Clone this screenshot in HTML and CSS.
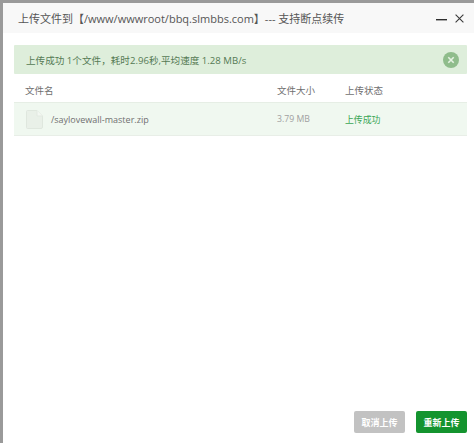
FILE: index.html
```html
<!DOCTYPE html>
<html lang="zh">
<head>
<meta charset="utf-8">
<title>上传文件</title>
<link rel="stylesheet" href="styles.css">
</head>
<body>
<div class="dialog">
  <header class="titlebar">
    <div class="title">上传文件到【/www/wwwroot/bbq.slmbbs.com】--- 支持断点续传</div>
    <div class="controls">
      <svg class="ctl-min" width="11" height="2" viewBox="0 0 11 2"><rect width="11" height="1.4" fill="#2f2f2f"/></svg>
      <svg class="ctl-close" width="9" height="9" viewBox="0 0 9 9"><path d="M.6.6l7.800 7.800M8.400.6L.6 8.400" stroke="#3a3a3a" stroke-width="1.1" fill="none"/></svg>
    </div>
  </header>
  <main class="content">
    <div class="alert">
      <span>上传成功 1个文件，耗时2.96秒,平均速度 1.28 MB/s</span>
      <span class="alert-close">
        <svg width="16" height="16" viewBox="0 0 16 16"><circle cx="8" cy="8" r="8" fill="#8fbc8b"/><path d="M5.300 5.300l5.400 5.400M10.700 5.300l-5.400 5.400" stroke="#e6f2e3" stroke-width="1.600" fill="none"/></svg>
      </span>
    </div>
    <div class="row head">
      <div class="c-name">文件名</div>
      <div class="c-size">文件大小</div>
      <div class="c-state">上传状态</div>
    </div>
    <div class="row file">
      <div class="c-name name-cell">
        <svg width="17" height="19" viewBox="0 0 17 19"><path d="M1.500.5H11L16.500 6V17a1.500 1.500 0 0 1-1.500 1.500H1.500A1 1 0 0 1 .5 17.500V1.500A1 1 0 0 1 1.500.5z" fill="#e9f0e8" stroke="#dfe7de"/><path d="M11 .5V6H16.500" fill="#f3f7f2" stroke="#e2e9e1"/></svg>
        <span>/saylovewall-master.zip</span>
      </div>
      <div class="c-size size-val">3.79 MB</div>
      <div class="c-state ok">上传成功</div>
    </div>
  </main>
  <footer class="actions">
    <button class="btn btn-off">取消上传</button>
    <button class="btn btn-go">重新上传</button>
  </footer>
</div>
</body>
</html>
```
FILE: styles.css
```css
* { box-sizing: border-box; }
html, body { height: 100%; }
body {
  margin: 0;
  padding: 3px 0 0 3px;
  background: #9a9a9a;
  font-family: "Open Sans", "Noto Sans CJK SC", sans-serif;
  overflow: hidden;
}
.dialog {
  height: 440px;
  width: 471px;
  background: #fff;
  display: flex;
  flex-direction: column;
}
.titlebar {
  height: 30px;
  flex: none;
  background: #f8f8f8;
  display: flex;
  align-items: center;
  justify-content: space-between;
  padding: 0 10px 0 15px;
}
.title { font-size: 11px; color: #555; white-space: nowrap; }
.controls { display: flex; align-items: center; gap: 8px; }
.ctl-min { margin-top: 4px; }
.content { flex: 1; padding: 12px 7px 0 11px; }
.alert {
  height: 29px;
  background: #deeedb;
  color: #557a54;
  font-size: 9.6px;
  display: flex;
  align-items: center;
  justify-content: space-between;
  padding: 0 8px 0 12px;
  border-radius: 1px;
}
.alert-close { display: flex; }
.row { display: flex; align-items: center; font-size: 9.5px; }
.head { height: 29px; color: #707070; border-bottom: 1px solid #e6eee5; padding-top: 3px; }
.file { height: 33px; background: #f0f8f0; border-bottom: 1px solid #e8eee7; color: #777; }
.c-name { padding-left: 11px; width: 263px; }
.c-size { width: 68px; }
.c-state { flex: 1; }
.name-cell { display: flex; align-items: center; gap: 8px; padding-left: 12px; font-size: 9px; color: #707070; }
.size-val { color: #a0a0a0; font-size: 8.7px; }
.ok { color: #3aa655; font-size: 8.9px; }
.actions { display: flex; justify-content: flex-end; gap: 11px; padding: 0 7px 10px 0; }
.btn {
  height: 22px;
  border: 0;
  border-radius: 2px;
  color: #fff;
  font: 700 9px "Open Sans", "Noto Sans CJK SC", sans-serif;
  padding: 0;
  width: 51px;
}
.btn-off { background: #c2c2c2; }
.btn-go { background: #14942f; }
```
